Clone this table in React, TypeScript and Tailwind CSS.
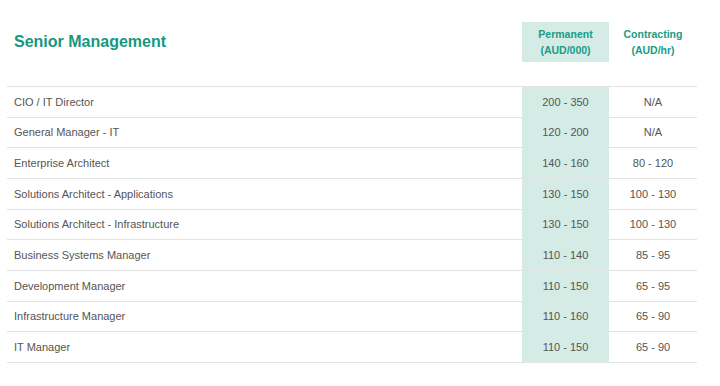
import React from "react";

const rows: [string, string, string][] = [
  ["CIO / IT Director", "200 - 350", "N/A"],
  ["General Manager - IT", "120 - 200", "N/A"],
  ["Enterprise Architect", "140 - 160", "80 - 120"],
  ["Solutions Architect - Applications", "130 - 150", "100 - 130"],
  ["Solutions Architect - Infrastructure", "130 - 150", "100 - 130"],
  ["Business Systems Manager", "110 - 140", "85 - 95"],
  ["Development Manager", "110 - 150", "65 - 95"],
  ["Infrastructure Manager", "110 - 160", "65 - 90"],
  ["IT Manager", "110 - 150", "65 - 90"],
];

export default function App() {
  return (
    <div
      className="w-[720px] h-[386px] bg-white px-[7px] pt-[22px]"
      style={{ fontFamily: '"Liberation Sans", Arial, sans-serif' }}
    >
      <div className="w-[690px]">
        <div className="flex items-stretch h-[40px]">
          <div className="flex-1 flex items-center pl-[7px]">
            <h1 className="text-[16px] font-bold text-[#17977f] leading-none">
              Senior Management
            </h1>
          </div>
          <div className="w-[87px] bg-[#d5ebe6] flex flex-col items-center justify-center text-[10.5px] font-bold text-[#1a9c84] leading-[16px]">
            <span>Permanent</span>
            <span>(AUD/000)</span>
          </div>
          <div className="w-[88px] flex flex-col items-center justify-center text-[10.5px] font-bold text-[#1a9c84] leading-[16px]">
            <span>Contracting</span>
            <span>(AUD/hr)</span>
          </div>
        </div>
        <div className="mt-[24px] border-t border-[#e3e3e3]">
          {rows.map(([role, perm, contract]) => (
            <div
              key={role}
              className="flex h-[30.67px] border-b border-[#e3e3e3] text-[11px] text-[#555555]"
            >
              <div className="flex-1 flex items-center pl-[7px]">{role}</div>
              <div className="w-[87px] bg-[#d5ebe6] flex items-center justify-center">
                {perm}
              </div>
              <div className="w-[88px] flex items-center justify-center">
                {contract}
              </div>
            </div>
          ))}
        </div>
      </div>
    </div>
  );
}
